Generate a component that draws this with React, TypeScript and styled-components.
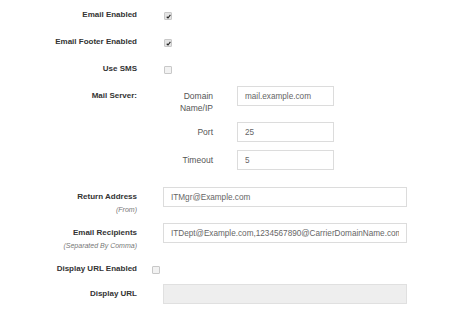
import styled, { createGlobalStyle } from "styled-components";

const GlobalStyle = createGlobalStyle`
  html, body {
    margin: 0;
    padding: 0;
    background: #fff;
  }
  body {
    font-family: "Liberation Sans", Arial, sans-serif;
    color: #333;
  }
`;

const Form = styled.form`
  display: flex;
  flex-direction: column;
  padding-top: 5px;
  width: 474px;
`;

const Row = styled.div<{ $mt?: number; $gap?: number }>`
  display: grid;
  grid-template-columns: 137px auto;
  column-gap: ${(p) => p.$gap ?? 26}px;
  align-items: start;
  min-height: 20px;
  margin-top: ${(p) => p.$mt ?? 0}px;
`;

const Label = styled.div`
  text-align: right;
  padding-top: 4px;
  font-size: 8px;
  line-height: 12px;
  font-weight: bold;
  color: #333;
  white-space: nowrap;
`;

const Hint = styled.span`
  display: block;
  font-size: 7px;
  line-height: 13px;
  font-weight: normal;
  font-style: italic;
  color: #777;
`;

const Check = styled.span<{ $checked?: boolean }>`
  display: flex;
  align-items: center;
  justify-content: center;
  width: 6px;
  height: 6px;
  margin: 7px 0 0 1px;
  border: 1px solid #c8c8c8;
  border-radius: 1px;
  background: ${(p) => (p.$checked ? "#e4e4e4" : "#f2f2f2")};

  svg {
    display: ${(p) => (p.$checked ? "block" : "none")};
  }
`;

const TextInput = styled.input<{ $w: number }>`
  box-sizing: border-box;
  width: ${(p) => p.$w}px;
  height: 20px;
  margin: 0;
  padding: 0 7px;
  border: 1px solid #dcdcdc;
  border-radius: 0;
  background: #fff;
  font-family: "Liberation Sans", Arial, sans-serif;
  font-size: 8.2px;
  color: #666;
  outline: none;

  &:disabled {
    background: #eee;
    border-color: #e0e0e0;
  }
`;

const SubGroup = styled.div`
  display: flex;
  flex-direction: column;
  gap: 8px;
`;

const SubRow = styled.div`
  display: grid;
  grid-template-columns: 50px 97px;
  column-gap: 24px;
  align-items: start;
`;

const SubLabel = styled.div`
  text-align: right;
  padding-top: 4px;
  font-size: 8.5px;
  line-height: 12px;
  color: #555;
`;

const Checkbox = ({ checked }: { checked?: boolean }) => (
  <Check $checked={checked}>
    <svg width="5" height="5" viewBox="0 0 10 10">
      <path d="M1.5 5.5 L4 8 L8.8 1.8" fill="none" stroke="#222" strokeWidth="2.2" />
    </svg>
  </Check>
);

export default function App() {
  return (
    <>
      <GlobalStyle />
      <Form onSubmit={(e) => e.preventDefault()}>
        <Row>
          <Label>Email Enabled</Label>
          <Checkbox checked />
        </Row>
        <Row $mt={7}>
          <Label>Email Footer Enabled</Label>
          <Checkbox checked />
        </Row>
        <Row $mt={7}>
          <Label>Use SMS</Label>
          <Checkbox />
        </Row>
        <Row $mt={7}>
          <Label>Mail Server:</Label>
          <SubGroup>
            <SubRow>
              <SubLabel>Domain Name/IP</SubLabel>
              <TextInput $w={97} defaultValue="mail.example.com" />
            </SubRow>
            <SubRow>
              <SubLabel>Port</SubLabel>
              <TextInput $w={97} defaultValue="25" />
            </SubRow>
            <SubRow>
              <SubLabel>Timeout</SubLabel>
              <TextInput $w={97} defaultValue="5" />
            </SubRow>
          </SubGroup>
        </Row>
        <Row $mt={17}>
          <Label>
            Return Address
            <Hint>(From)</Hint>
          </Label>
          <TextInput $w={244} defaultValue="ITMgr@Example.com" />
        </Row>
        <Row $mt={7}>
          <Label>
            Email Recipients
            <Hint>(Separated By Comma)</Hint>
          </Label>
          <TextInput
            $w={244}
            defaultValue="ITDept@Example.com,1234567890@CarrierDomainName.com"
          />
        </Row>
        <Row $mt={7} $gap={14}>
          <Label>Display URL Enabled</Label>
          <Checkbox />
        </Row>
        <Row $mt={5}>
          <Label>Display URL</Label>
          <TextInput $w={244} disabled />
        </Row>
      </Form>
    </>
  );
}
